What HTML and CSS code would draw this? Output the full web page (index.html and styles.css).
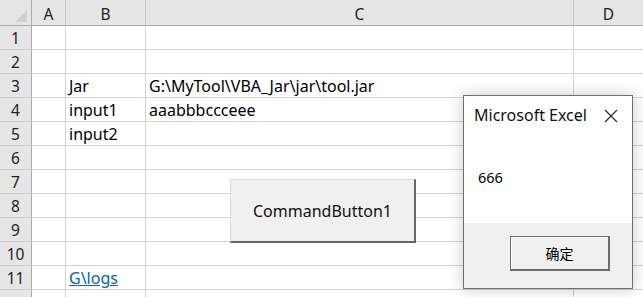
FILE: index.html
```html
<!DOCTYPE html>
<html>
<head>
<meta charset="utf-8">
<link rel="stylesheet" href="styles.css">
</head>
<body>
<div class="sheet">
  <div class="hd corner"><span class="tri"></span></div>
  <div class="hd col">A</div>
  <div class="hd col">B</div>
  <div class="hd col">C</div>
  <div class="hd col last">D</div>

  <div class="rh">1</div><div class="c"></div><div class="c"></div><div class="c"></div><div class="c"></div>
  <div class="rh">2</div><div class="c"></div><div class="c"></div><div class="c"></div><div class="c"></div>
  <div class="rh">3</div><div class="c"></div><div class="c">Jar</div><div class="c">G:\MyTool\VBA_Jar\jar\tool.jar</div><div class="c"></div>
  <div class="rh">4</div><div class="c"></div><div class="c">input1</div><div class="c">aaabbbccceee</div><div class="c"></div>
  <div class="rh">5</div><div class="c"></div><div class="c">input2</div><div class="c"></div><div class="c"></div>
  <div class="rh">6</div><div class="c"></div><div class="c"></div><div class="c"></div><div class="c"></div>
  <div class="rh">7</div><div class="c"></div><div class="c"></div><div class="c"></div><div class="c"></div>
  <div class="rh">8</div><div class="c"></div><div class="c"></div><div class="c"></div><div class="c"></div>
  <div class="rh">9</div><div class="c"></div><div class="c"></div><div class="c"></div><div class="c"></div>
  <div class="rh">10</div><div class="c"></div><div class="c"></div><div class="c"></div><div class="c"></div>
  <div class="rh">11</div><div class="c"></div><div class="c"><a class="link" href="#">G\logs</a></div><div class="c"></div><div class="c"></div>
  <div class="rh"></div><div class="c"></div><div class="c"></div><div class="c"></div><div class="c"></div>
</div>

<div class="cmdbtn">CommandButton1</div>

<div class="dialog">
  <div class="dlg-body">
    <div class="dlg-title">
      <span>Microsoft Excel</span>
      <svg class="close" width="14" height="14" viewBox="0 0 14 14"><path d="M1 1 L13 13 M13 1 L1 13" stroke="#222" stroke-width="1.1" fill="none"/></svg>
    </div>
    <div class="dlg-msg">666</div>
  </div>
  <div class="dlg-foot">
    <div class="okbtn">确定</div>
  </div>
</div>
</body>
</html>
```

FILE: styles.css
```css
html, body {
  margin: 0;
  padding: 0;
  background: #ffffff;
  overflow: hidden;
}
body {
  width: 643px;
  height: 297px;
  position: relative;
  font-family: "Noto Sans", "Noto Sans CJK SC", sans-serif;
  color: #000;
}
.sheet {
  display: grid;
  grid-template-columns: 32px 34px 80px 428px 70px;
  grid-template-rows: 26px repeat(11, 24px) 8px;
  width: 644px;
  overflow: hidden;
}
.sheet > div {
  box-sizing: border-box;
  border-right: 1px solid #d4d4d4;
  border-bottom: 1px solid #d4d4d4;
}
.hd {
  background: #e6e6e6;
  border-bottom: 1px solid #ababab !important;
  display: flex;
  align-items: center;
  justify-content: center;
  font-size: 15.5px;
  color: #222;
  padding-top: 2px;
}
.hd.col {
  border-right: 1px solid #c8c8c8 !important;
}
.corner {
  position: relative;
  border-right: 1px solid #ababab !important;
}
.tri {
  position: absolute;
  right: 4px;
  bottom: 3px;
  width: 0;
  height: 0;
  border-left: 12px solid transparent;
  border-bottom: 12px solid #d0d0d0;
}
.rh {
  background: #e6e6e6;
  border-right: 1px solid #ababab !important;
  border-bottom: 1px solid #d0d0d0 !important;
  display: flex;
  align-items: center;
  justify-content: center;
  font-size: 15.5px;
  color: #222;
}
.c {
  font-size: 16px;
  line-height: 24px;
  padding-left: 3px;
  white-space: nowrap;
  overflow: visible;
}
.link {
  color: #0563c1;
  text-decoration: underline;
}
.cmdbtn {
  position: absolute;
  left: 230px;
  top: 179px;
  width: 186px;
  height: 64px;
  box-sizing: border-box;
  background: #f0f0f0;
  border-top: 1px solid #dcdcdc;
  border-left: 1px solid #dcdcdc;
  border-right: 2px solid #666;
  border-bottom: 2px solid #666;
  display: flex;
  align-items: center;
  justify-content: center;
  font-size: 16px;
  color: #111;
}
.dialog {
  position: absolute;
  left: 463px;
  top: 95px;
  width: 170px;
  height: 194px;
  box-sizing: border-box;
  border: 1px solid #6e6e6e;
  background: #fff;
  box-shadow: 0 0 14px rgba(0,0,0,0.22);
  display: flex;
  flex-direction: column;
}
.dlg-body {
  height: 127px;
  background: #fff;
}
.dlg-title {
  display: flex;
  justify-content: space-between;
  align-items: center;
  padding: 8px 14px 0 10px;
  font-size: 16px;
  color: #111;
}
.close {
  margin-top: 1px;
}
.dlg-msg {
  padding: 41px 0 0 14px;
  font-size: 14.5px;
}
.dlg-foot {
  flex: 1;
  background: #f0f0f0;
  position: relative;
}
.okbtn {
  position: absolute;
  left: 46px;
  top: 13px;
  width: 100px;
  height: 35px;
  box-sizing: border-box;
  background: #f0f0f0;
  border: 1px solid #6e6e6e;
  border-right-width: 2px;
  border-bottom-width: 2px;
  box-shadow: inset 1px 1px 0 #fff;
  display: flex;
  align-items: center;
  justify-content: center;
  font-size: 14px;
  color: #000;
  font-family: "Noto Sans CJK SC", sans-serif;
}
```
